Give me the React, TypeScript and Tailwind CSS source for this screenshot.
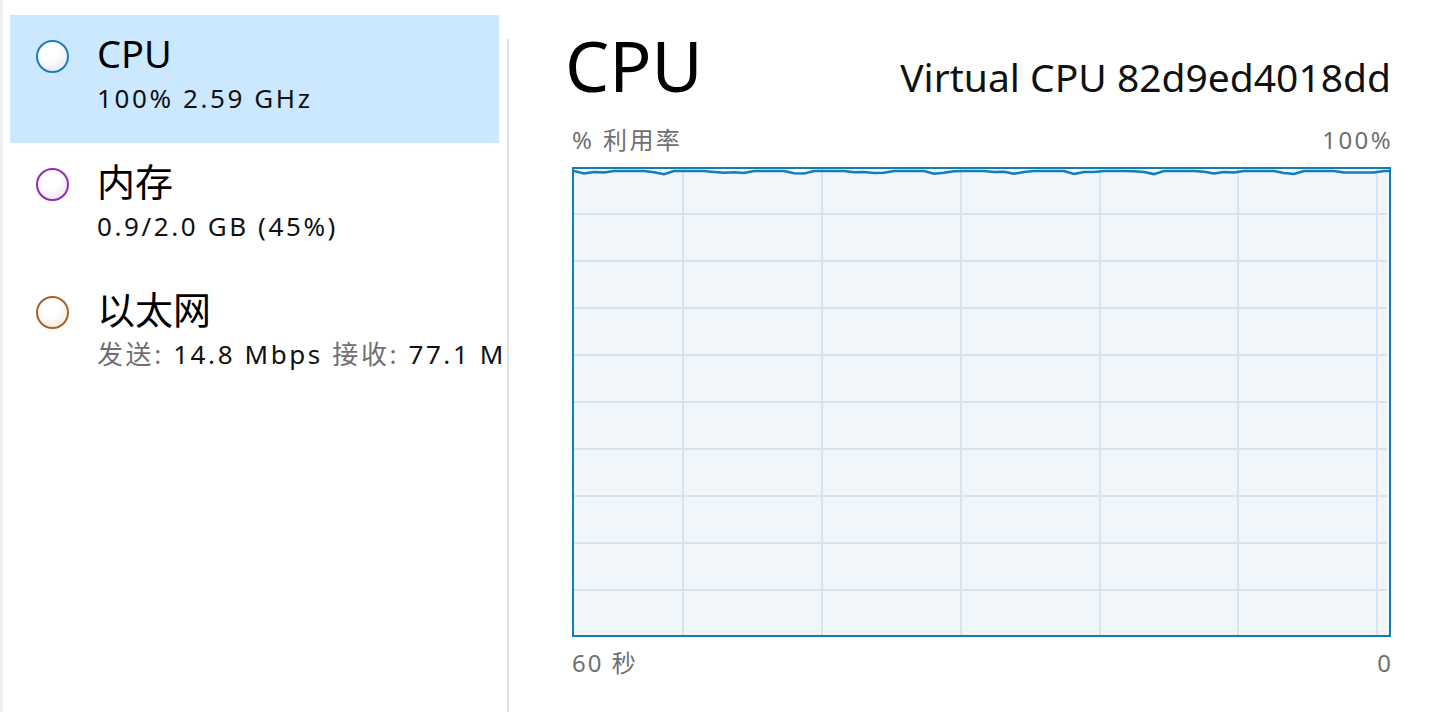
import type { ReactNode } from "react";

const FONT = { fontFamily: '"Noto Sans", "Noto Sans CJK SC", sans-serif' };

interface ResourceRowProps {
  title: string;
  sub: ReactNode;
  dot: string;
  selected?: boolean;
}

function ResourceRow({ title, sub, dot, selected }: ResourceRowProps) {
  return (
    <div
      className={`flex h-[128px] w-[489px] items-start ${
        selected ? "bg-[#cce8ff]" : ""
      }`}
    >
      <div
        className={`ml-[26px] mt-[25px] h-[33px] w-[33px] shrink-0 rounded-full border-[2.5px] ${dot}`}
      />
      <div className="ml-[28px] mt-[19px] whitespace-nowrap">
        <div className="text-[38px] leading-[38px] text-black">{title}</div>
        <div className="mt-[13px] text-[26px] leading-[26px] tracking-[2.6px] text-[#111111]">
          {sub}
        </div>
      </div>
    </div>
  );
}

// 100% 사용 중이라 맨 위에 거의 붙어 있는 선
const linePoints = Array.from({ length: 83 }, (_, i) => {
  const x = i * 10;
  const bump = Math.max(0, Math.sin(i * 0.9) * 2.2 + Math.sin(i * 2.3) * 1.1);
  return `${x},${(2 + bump).toFixed(1)}`;
}).join(" ");

function CpuChart() {
  const rows = [45, 92, 139, 186, 233, 280, 327, 374, 421];
  const cols = [109, 248, 387, 526, 664, 803];
  return (
    <div className="h-[470px] w-[819px] border-2 border-[#117dbb] bg-[#f1f6fa]">
      <svg width="815" height="466" viewBox="0 0 815 466" className="block">
        {rows.map((y) => (
          <line key={y} x1="0" x2="813" y1={y} y2={y} stroke="#d5e6f2" strokeWidth="2" />
        ))}
        {cols.map((x) => (
          <line key={x} x1={x} x2={x} y1="0" y2="466" stroke="#d5e6f2" strokeWidth="2" />
        ))}
        <polyline points={linePoints} fill="none" stroke="#117dbb" strokeWidth="2.5" />
      </svg>
    </div>
  );
}

export default function App() {
  return (
    <div className="flex h-[712px] w-full bg-white" style={FONT}>
      <div className="w-[507px] shrink-0 overflow-hidden border-l-[3px] border-[#f0f0f0] pl-[7px] pt-[15px]">
        <ResourceRow
          selected
          title="CPU"
          sub="100% 2.59 GHz"
          dot="border-[#1b7dc0] bg-[radial-gradient(circle_at_40%_30%,#ffffff_35%,#dbe3ec)]"
        />
        <ResourceRow
          title="内存"
          sub="0.9/2.0 GB (45%)"
          dot="border-[#9529b8] bg-[radial-gradient(circle_at_40%_30%,#ffffff_35%,#eddcf4)]"
        />
        <ResourceRow
          title="以太网"
          sub={
            <>
              <span className="text-[#6f6f6f]">发送:</span> 14.8 Mbps{" "}
              <span className="text-[#6f6f6f]">接收:</span> 77.1 Mbps
            </>
          }
          dot="border-[#a8612a] bg-[radial-gradient(circle_at_40%_30%,#ffffff_35%,#f6e3d4)]"
        />
      </div>

      <div className="mt-[39px] w-[2px] shrink-0 bg-[#e2e2e2]" />

      <div className="w-[882px] pl-[63px] pt-[30px]">
        <div className="flex w-[819px] items-baseline justify-between">
          <h1 className="-ml-[7px] text-[70px] leading-[70px] text-black">CPU</h1>
          <div className="text-[39px] leading-[39px] text-[#111111]">
            Virtual CPU 82d9ed4018dd
          </div>
        </div>

        <div className="mt-[28px] flex w-[819px] justify-between text-[24px] leading-[24px] tracking-[2.4px] text-[#6f6f6f]">
          <span>% 利用率</span>
          <span className="-mr-[2px]">100%</span>
        </div>

        <div className="mt-[15px]">
          <CpuChart />
        </div>

        <div className="mt-[14px] flex w-[819px] justify-between text-[24px] leading-[24px] tracking-[2px] text-[#6f6f6f]">
          <span>60 秒</span>
          <span className="-mr-[2px]">0</span>
        </div>
      </div>
    </div>
  );
}
